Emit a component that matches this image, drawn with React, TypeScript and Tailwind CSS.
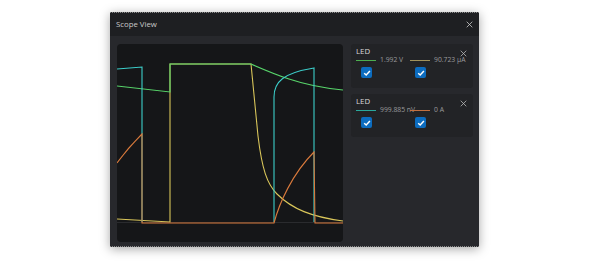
import React from "react";

function CloseIcon({ size = 8, color = "#c8c8c8" }: { size?: number; color?: string }) {
  return (
    <svg width={size} height={size} viewBox="0 0 10 10">
      <path d="M1 1 L9 9 M9 1 L1 9" stroke={color} strokeWidth="1.1" fill="none" />
    </svg>
  );
}

function Check() {
  return (
    <div className="w-[11px] h-[11px] rounded-[2px] bg-[#0c6cbf] flex items-center justify-center">
      <svg width="8" height="8" viewBox="0 0 10 10">
        <path d="M1.5 5.2 L4 7.6 L8.6 2.4" stroke="#ffffff" strokeWidth="1.8" fill="none" />
      </svg>
    </div>
  );
}

function LegendItem({ color, text }: { color: string; text: string }) {
  return (
    <div className="flex flex-col w-[54px]">
      <div className="flex items-center h-[8px]">
        <div className="w-[20px] h-[1px] shrink-0" style={{ background: color }} />
        <span className="ml-[4px] text-[6.8px] leading-none text-[#9a9a9c] whitespace-nowrap">{text}</span>
      </div>
      <div className="mt-[3px] ml-[5px]">
        <Check />
      </div>
    </div>
  );
}

function Card({ items, h }: { items: { color: string; text: string }[]; h: string }) {
  return (
    <div className={`bg-[#222326] rounded-[3px] pl-[5px] pr-[5px] pt-[3px] ${h}`}>
      <div className="flex items-start justify-between">
        <span className="text-[7.8px] leading-[9px] text-[#dadada]">LED</span>
        <div className="mt-[3px] mr-[1px]">
          <CloseIcon size={7} color="#bdbdbd" />
        </div>
      </div>
      <div className="flex -mt-[1px]">
        {items.map((it, i) => (
          <LegendItem key={i} color={it.color} text={it.text} />
        ))}
      </div>
    </div>
  );
}

function Chart() {
  return (
    <svg width="226" height="198" viewBox="0 0 226 198" className="block">
      <line x1="0" y1="178.5" x2="226" y2="178.5" stroke="#2a2b2e" strokeWidth="1" />
      {/* yellow */}
      <path
        d="M0,175 L53,178 L53,20 L134,20 L141,92 C145,125 150,140 160,150 C175,165 195,173 226,177"
        stroke="#d9c65a"
        strokeWidth="1.1"
        fill="none"
      />
      {/* green */}
      <path
        d="M0,42 L53,48 L53,20 L134,20 C150,27 160,31 172,35 C190,41 205,44 226,46"
        stroke="#57d46a"
        strokeWidth="1.1"
        fill="none"
      />
      {/* cyan */}
      <path
        d="M0,25 L25,23 L25,178 M157,178 L157,53 C157,38 166,29 197,24 L197,178"
        stroke="#3ccfcb"
        strokeWidth="1.1"
        fill="none"
      />
      {/* orange */}
      <path
        d="M0,119 C8,108 16,99 25,90 L25,179 L157,179 C162,160 175,130 197,108 L198,179 L226,179"
        stroke="#d97a3c"
        strokeWidth="1.1"
        fill="none"
      />
    </svg>
  );
}

export default function App() {
  return (
    <div
      className="w-[600px] h-[271px] bg-white pt-[12px] pl-[110px]"
      style={{ fontFamily: "'Open Sans', 'Noto Sans', sans-serif" }}
    >
      <div className="w-[369px] h-[235px] flex flex-col bg-[#27282c] border-y border-dotted border-[#8a8a8a] shadow-[0_2px_10px_rgba(0,0,0,0.35)]">
        <div className="h-[23px] bg-[#1e1f22] flex items-center justify-between pl-[6px] pr-[6px] shrink-0">
          <span className="text-[7.8px] text-[#c9c9c9]">Scope View</span>
          <CloseIcon size={7} color="#d0d0d0" />
        </div>
        <div className="flex flex-1 pl-[7px] pr-[6px] pt-[8px] pb-[4px] gap-[8px]">
          <div className="w-[226px] h-[198px] bg-[#151618] rounded-[4px] overflow-hidden shrink-0">
            <Chart />
          </div>
          <div className="flex flex-col gap-[6px] w-[122px]">
            <Card
              h="h-[44px]"
              items={[
                { color: "#4caf50", text: "1.992 V" },
                { color: "#a3935a", text: "90.723 µA" },
              ]}
            />
            <Card
              h="h-[43px]"
              items={[
                { color: "#2aa89c", text: "999.885 nV" },
                { color: "#c4703f", text: "0 A" },
              ]}
            />
          </div>
        </div>
      </div>
    </div>
  );
}
